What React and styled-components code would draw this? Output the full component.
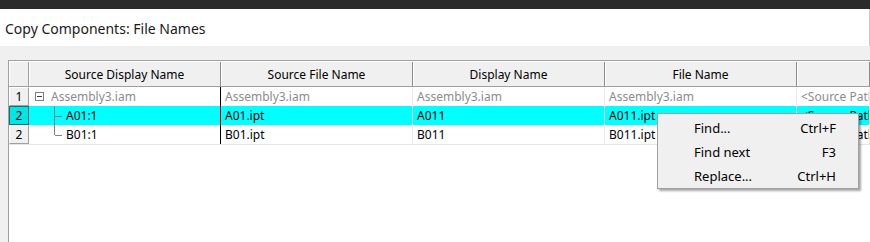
import styled, { createGlobalStyle } from "styled-components"

const GlobalStyle = createGlobalStyle`
    html, body {
        margin: 0;
        padding: 0;
        background: #f0f0f0;
        overflow: hidden;
    }
    body {
        font-family: "Noto Sans", "Open Sans", sans-serif;
    }
`

const columns = [
    { key: "srcDisplay", title: "Source Display Name" },
    { key: "srcFile", title: "Source File Name" },
    { key: "display", title: "Display Name" },
    { key: "file", title: "File Name" },
    { key: "path", title: "" },
]

const rows = [
    { num: 1, level: 0, muted: true, srcDisplay: "Assembly3.iam", srcFile: "Assembly3.iam", display: "Assembly3.iam", file: "Assembly3.iam", path: "<Source Path>" },
    { num: 2, level: 1, selected: true, srcDisplay: "A01:1", srcFile: "A01.ipt", display: "A011", file: "A011.ipt", path: "<Source Path>" },
    { num: 2, level: 1, last: true, srcDisplay: "B01:1", srcFile: "B01.ipt", display: "B011", file: "B011.ipt", path: "<Source Path>" },
]

const menuItems = [
    { label: "Find...", shortcut: "Ctrl+F" },
    { label: "Find next", shortcut: "F3" },
    { label: "Replace...", shortcut: "Ctrl+H" },
]

export default function App() {
    return (
        <Window>
            <GlobalStyle />
            <TopBar />
            <TitleArea>
                <Title>Copy Components: File Names</Title>
            </TitleArea>
            <Body>
                <Grid>
                    <HeaderRow>
                        <CornerCell />
                        {columns.map((col) => (
                            <HeaderCell key={col.key}>{col.title}</HeaderCell>
                        ))}
                    </HeaderRow>
                    {rows.map((row, i) => (
                        <DataRow key={i} $selected={row.selected}>
                            <RowNumber $selected={row.selected}>{row.num}</RowNumber>
                            {columns.map((col, c) => (
                                <Cell key={col.key} $muted={row.muted} $dark={c === 0}>
                                    {c === 0 ? (
                                        <TreeCell>
                                            {row.level === 0 ? (
                                                <Expander />
                                            ) : (
                                                <TreeLine $last={row.last} />
                                            )}
                                            <span>{row[col.key]}</span>
                                        </TreeCell>
                                    ) : (
                                        row[col.key]
                                    )}
                                </Cell>
                            ))}
                        </DataRow>
                    ))}
                </Grid>
                <Menu>
                    {menuItems.map((item) => (
                        <MenuItem key={item.label}>
                            <span>{item.label}</span>
                            <span>{item.shortcut}</span>
                        </MenuItem>
                    ))}
                </Menu>
            </Body>
        </Window>
    )
}

const Window = styled.div`
    width: 870px;
    height: 242px;
    display: flex;
    flex-direction: column;
    background: #f0f0f0;
    overflow: hidden;
`

const TopBar = styled.div`
    height: 9px;
    background: #2b2b2b;
    flex-shrink: 0;
`

const TitleArea = styled.div`
    height: 37px;
    background: #ffffff;
    border-right: 1px solid #c8c8c8;
    display: flex;
    align-items: center;
    padding-left: 5px;
    flex-shrink: 0;
`

const Title = styled.div`
    font-size: 14px;
    color: #1a1a1a;
    padding-top: 1px;
`

const Body = styled.div`
    flex: 1;
    position: relative;
    padding: 14px 0 0 8px;
`

const Grid = styled.div`
    height: 100%;
    background: #ffffff;
    border-top: 1px solid #a0a0a0;
    border-left: 1px solid #a0a0a0;
    font-size: 12px;
`

const rowColumns = "20px 192px 192px 192px 192px 1fr"

const HeaderRow = styled.div`
    display: grid;
    grid-template-columns: ${rowColumns};
    height: 25px;
    background: #f0f0f0;
    border-top: 1px solid #ffffff;
`

const CornerCell = styled.div`
    border-right: 1px solid #a0a0a0;
    border-bottom: 1px solid #a0a0a0;
    box-shadow: inset 1px 0 0 #ffffff;
`

const HeaderCell = styled.div`
    display: flex;
    align-items: center;
    justify-content: center;
    color: #000000;
    border-right: 1px solid #8c8c8c;
    border-bottom: 1px solid #a0a0a0;
    box-shadow: inset 1px 0 0 #ffffff;
    white-space: nowrap;
    overflow: hidden;
`

const DataRow = styled.div`
    display: grid;
    grid-template-columns: ${rowColumns};
    height: 19px;
    background: ${(p) => (p.$selected ? "#00ffff" : "#ffffff")};
    &:last-of-type {
        border-bottom: 1px solid #e6e6e6;
    }
`

const RowNumber = styled.div`
    display: flex;
    align-items: center;
    justify-content: center;
    background: ${(p) => (p.$selected ? "#00e5e5" : "#f0f0f0")};
    border: 1px solid ${(p) => (p.$selected ? "#1e6e6e" : "#a0a0a0")};
    border-top: 1px solid ${(p) => (p.$selected ? "#1e6e6e" : "#ffffff")};
    border-left: 1px solid ${(p) => (p.$selected ? "#1e6e6e" : "#ffffff")};
    box-sizing: border-box;
    color: #000000;
`

const Cell = styled.div`
    display: flex;
    align-items: center;
    padding-left: 4px;
    color: ${(p) => (p.$muted ? "#8c8c8c" : "#000000")};
    border-right: 1px solid ${(p) => (p.$dark ? "#000000" : "#eaeaea")};
    white-space: nowrap;
    overflow: hidden;
`

const TreeCell = styled.div`
    display: flex;
    align-items: center;
    height: 100%;
`

const Expander = styled.div`
    position: relative;
    width: 7px;
    height: 7px;
    border: 1px solid #808080;
    background: #ffffff;
    margin: 0 7px 0 2px;
    flex-shrink: 0;
    &::after {
        content: "";
        position: absolute;
        left: 1px;
        right: 1px;
        top: 3px;
        border-top: 1px solid #404040;
    }
`

const TreeLine = styled.div`
    position: relative;
    width: 8px;
    margin: 0 3px 0 21px;
    border-left: 1px solid #808080;
    height: ${(p) => (p.$last ? "50%" : "100%")};
    align-self: flex-start;
    flex-shrink: 0;
    &::after {
        content: "";
        position: absolute;
        left: 0;
        top: ${(p) => (p.$last ? "100%" : "50%")};
        width: 7px;
        border-top: 1px solid #808080;
    }
`

const Menu = styled.div`
    position: absolute;
    left: 657px;
    top: 67px;
    width: 200px;
    padding: 2px 0 0;
    background: #f0f0f0;
    border: 1px solid #a0a0a0;
    box-shadow: 2px 2px 2px rgba(0, 0, 0, 0.35);
    font-size: 13px;
    color: #000000;
`

const MenuItem = styled.div`
    display: flex;
    justify-content: space-between;
    align-items: center;
    height: 24px;
    padding: 0 22px 0 36px;
`
